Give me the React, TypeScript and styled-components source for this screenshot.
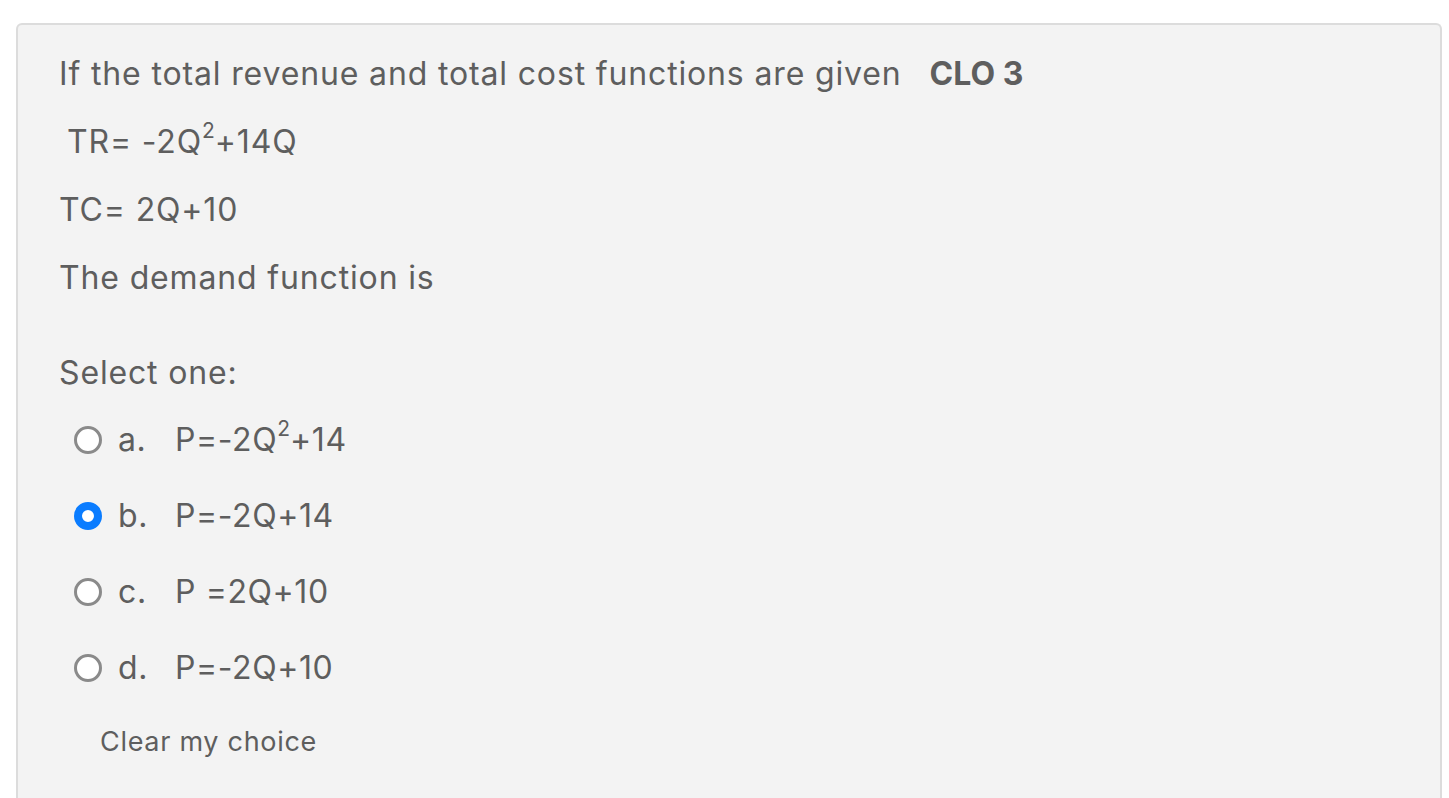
import styled, { createGlobalStyle } from 'styled-components';

const GlobalStyle = createGlobalStyle`
  html, body {
    margin: 0;
    padding: 0;
    background: #ffffff;
  }
  body {
    font-family: Inter, "Open Sans", "Liberation Sans", sans-serif;
    color: #5e5e5e;
  }
`;

type Choice = {
  letter: string;
  text: React.ReactNode;
  checked?: boolean;
};

const choices: Choice[] = [
  { letter: 'a.', text: <>P=-2Q<sup>2</sup>+14</> },
  { letter: 'b.', text: 'P=-2Q+14', checked: true },
  { letter: 'c.', text: 'P =2Q+10' },
  { letter: 'd.', text: 'P=-2Q+10' },
];

const App = (): JSX.Element => {
  return (
    <>
      <GlobalStyle />
      <Card>
        <QuestionText>
          <Line>
            If the total revenue and total cost functions are given
            <Tag>CLO 3</Tag>
          </Line>
          <Line indent>
            TR= -2Q<Sup>2</Sup>+14Q
          </Line>
          <Line>TC= 2Q+10</Line>
          <Line>The demand function is</Line>
        </QuestionText>
        <Prompt>Select one:</Prompt>
        <Answers>
          {choices.map((c) => (
            <Row key={c.letter}>
              <Radio checked={c.checked} />
              <Letter>{c.letter}</Letter>
              <AnswerText>{c.text}</AnswerText>
            </Row>
          ))}
        </Answers>
        <ClearLink>Clear my choice</ClearLink>
      </Card>
    </>
  );
};

const Card = styled.div`
  margin: 23px 7px 0 16px;
  border: 2px solid #dcdcdc;
  border-bottom: none;
  border-radius: 6px 6px 0 0;
  background-color: #f3f3f3;
  padding: 26px 41px 60px;
  box-sizing: border-box;
  min-height: 800px;
`;

const QuestionText = styled.div`
  display: flex;
  flex-direction: column;
  gap: 23px;
`;

const Line = styled.p<{ indent?: boolean }>`
  margin: 0;
  font-size: 32px;
  letter-spacing: 0.85px;
  line-height: 45px;
  padding-left: ${({ indent }) => (indent ? '8px' : '0')};
`;

const Sup = styled.sup`
  font-size: 21px;
  line-height: 0;
  vertical-align: 15px;
  letter-spacing: 0;
`;

const Tag = styled.b`
  font-weight: 700;
  margin-left: 28px;
  letter-spacing: 0;
`;

const Prompt = styled.div`
  margin-top: 50px;
  font-size: 32px;
  letter-spacing: 0.85px;
  line-height: 45px;
`;

const Answers = styled.div`
  display: flex;
  flex-direction: column;
  gap: 31px;
  margin-top: 22px;
  padding-left: 15px;
`;

const Row = styled.label`
  display: flex;
  align-items: center;
  font-size: 32px;
  letter-spacing: 0.6px;
  line-height: 45px;
`;

const Radio = styled.span<{ checked?: boolean }>`
  width: 28px;
  height: 28px;
  border-radius: 50%;
  box-sizing: border-box;
  background: #ffffff;
  border: ${({ checked }) => (checked ? '8px solid #0a7cff' : '3px solid #8a8a8a')};
  flex-shrink: 0;
`;

const Letter = styled.span`
  width: 57px;
  margin-left: 16px;
`;

const AnswerText = styled.span`
  sup {
    font-size: 21px;
    line-height: 0;
    vertical-align: 15px;
    letter-spacing: 0;
  }
`;

const ClearLink = styled.a`
  display: inline-block;
  margin-top: 32px;
  margin-left: 41px;
  font-size: 27px;
  letter-spacing: 0.7px;
  line-height: 40px;
  color: #5e5e5e;
  cursor: pointer;
`;

export default App;
